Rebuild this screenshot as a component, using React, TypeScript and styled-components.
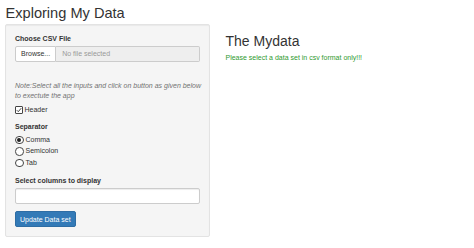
import React from "react";
import styled, { createGlobalStyle } from "styled-components";

const GlobalStyle = createGlobalStyle`
    html, body {
        margin: 0;
        padding: 0;
        background: #fff;
    }

    body {
        font-family: "Liberation Sans", Arial, sans-serif;
        color: #333;
        font-size: 7px;
        line-height: 10px;
    }
`;

const Page = styled.div`
    width: 474px;
    height: 248px;
    overflow: hidden;
`;

const Title = styled.h2`
    margin: 5px 0 2.5px 5.5px;
    font-size: 14.6px;
    line-height: 16.5px;
    font-weight: 400;
    color: #333;
`;

const Row = styled.div`
    display: flex;
    align-items: flex-start;
    padding-left: 5px;
`;

const Well = styled.div`
    width: 205px;
    box-sizing: border-box;
    padding: 8.5px 9px 9px 9px;
    background: #f5f5f5;
    border: 1px solid #e3e3e3;
    border-radius: 2px;
    box-shadow: inset 0 1px 1px rgba(0, 0, 0, 0.05);
`;

const Label = styled.div<{ $top?: number }>`
    margin-top: ${(p) => p.$top ?? 0}px;
    font-weight: 700;
    line-height: 10px;
`;

const FileGroup = styled.div`
    display: flex;
    margin-top: 2.5px;
    height: 16px;
`;

const BrowseButton = styled.div`
    display: flex;
    align-items: center;
    padding: 0 5px;
    background: #fff;
    border: 1px solid #ccc;
    border-radius: 2px 0 0 2px;
    color: #333;
`;

const FileName = styled.div`
    flex: 1;
    display: flex;
    align-items: center;
    padding: 0 6px;
    background: #eee;
    border: 1px solid #ccc;
    border-left: none;
    border-radius: 0 2px 2px 0;
    color: #999;
`;

const Note = styled.div`
    margin-top: 19px;
    font-style: italic;
    color: #737373;
    line-height: 10px;
    white-space: nowrap;
`;

const Option = styled.div<{ $top?: number; $height?: number }>`
    display: flex;
    align-items: center;
    gap: 1.5px;
    margin-top: ${(p) => p.$top ?? 0}px;
    height: ${(p) => p.$height ?? 10}px;
`;

const Box = styled.span`
    width: 8px;
    height: 8px;
    box-sizing: border-box;
    border: 1px solid #444;
    border-radius: 1px;
    background: #fff;
    display: flex;
    align-items: center;
    justify-content: center;
`;

const Radio = styled.span<{ $checked?: boolean }>`
    width: 8.5px;
    height: 8.5px;
    box-sizing: border-box;
    border: 1px solid #444;
    border-radius: 50%;
    background: #fff;
    display: flex;
    align-items: center;
    justify-content: center;
    margin-right: 0.5px;

    &::after {
        content: "";
        display: ${(p) => (p.$checked ? "block" : "none")};
        width: 4px;
        height: 4px;
        border-radius: 50%;
        background: #222;
    }
`;

const RadioGroup = styled.div`
    margin-top: 2px;
`;

const TextInput = styled.div`
    margin-top: 2px;
    height: 16px;
    box-sizing: border-box;
    background: #fff;
    border: 1px solid #ccc;
    border-radius: 2px;
    box-shadow: inset 0 1px 1px rgba(0, 0, 0, 0.075);
`;

const SubmitButton = styled.button`
    display: block;
    margin-top: 7px;
    height: 16px;
    padding: 0 4px;
    font-family: inherit;
    font-size: 7px;
    color: #fff;
    background: #337ab7;
    border: 1px solid #2e6da4;
    border-radius: 2px;
`;

const Main = styled.div`
    margin-left: 15.5px;
    padding-top: 9.5px;
`;

const Heading = styled.h2`
    margin: 0;
    font-size: 14px;
    line-height: 15.4px;
    font-weight: 400;
    color: #333;
`;

const Message = styled.p`
    margin: 4px 0 0;
    color: #2f9a2f;
    line-height: 10px;
`;

const separators = ["Comma", "Semicolon", "Tab"];

export default function App() {
    return (
        <Page>
            <GlobalStyle />
            <Title>Exploring My Data</Title>
            <Row>
                <Well>
                    <Label>Choose CSV File</Label>
                    <FileGroup>
                        <BrowseButton>Browse...</BrowseButton>
                        <FileName>No file selected</FileName>
                    </FileGroup>
                    <Note>
                        Note:Select all the inputs and click on button as given below
                        <br />
                        to exectute the app
                    </Note>
                    <Option $top={4}>
                        <Box>
                            <svg width="6" height="6" viewBox="0 0 6 6">
                                <polyline
                                    points="0.8,3.2 2.3,4.7 5.2,1.2"
                                    fill="none"
                                    stroke="#333"
                                    strokeWidth="0.9"
                                />
                            </svg>
                        </Box>
                        Header
                    </Option>
                    <Label $top={7}>Separator</Label>
                    <RadioGroup>
                        {separators.map((item, index) => (
                            <Option key={item} $height={11.5}>
                                <Radio $checked={index === 0} />
                                {item}
                            </Option>
                        ))}
                    </RadioGroup>
                    <Label $top={7.5}>Select columns to display</Label>
                    <TextInput />
                    <SubmitButton>Update Data set</SubmitButton>
                </Well>
                <Main>
                    <Heading>The Mydata</Heading>
                    <Message>Please select a data set in csv format only!!!</Message>
                </Main>
            </Row>
        </Page>
    );
}
